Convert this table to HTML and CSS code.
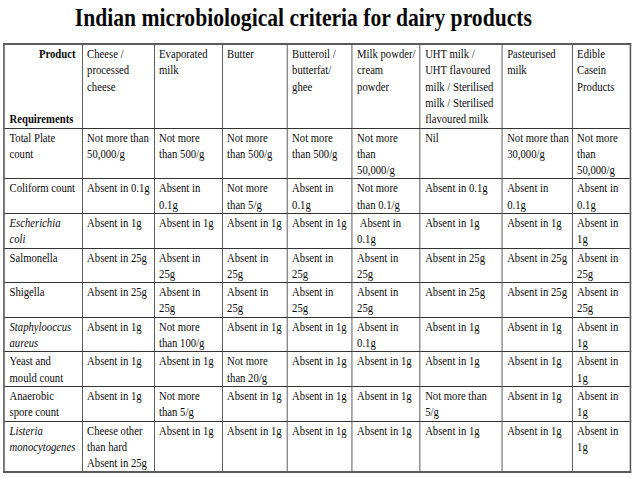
FILE: index.html
```html
<!DOCTYPE html>
<html>
<head>
<meta charset="utf-8">
<link rel="stylesheet" href="styles.css">
</head>
<body>
<div class="title-wrap"><h1 class="title">Indian microbiological criteria for dairy products</h1></div>
<div class="table-wrap">
<table class="criteria">
<colgroup>
<col class="c-req"><col class="c-cheese"><col class="c-evap"><col class="c-butter"><col class="c-oil"><col class="c-powder"><col class="c-uht"><col class="c-past"><col class="c-casein">
</colgroup>
<tr class="head">
<td class="corner"><div class="corner-box"><span class="product">Product</span><span class="req">Requirements</span></div></td>
<td>Cheese /<br>processed<br>cheese</td>
<td>Evaporated<br>milk</td>
<td>Butter</td>
<td>Butteroil /<br>butterfat/<br>ghee</td>
<td>Milk powder/<br>cream<br>powder</td>
<td>UHT milk /<br>UHT flavoured<br>milk / Sterilised<br>milk / Sterilised<br>flavoured milk</td>
<td>Pasteurised<br>milk</td>
<td>Edible<br>Casein<br>Products</td>
</tr>
<tr>
<td>Total Plate<br>count</td>
<td>Not more than<br>50,000/g</td>
<td>Not more<br>than 500/g</td>
<td>Not more<br>than 500/g</td>
<td>Not more<br>than 500/g</td>
<td>Not more<br>than<br>50,000/g</td>
<td>Nil</td>
<td>Not more than<br>30,000/g</td>
<td>Not more<br>than<br>50,000/g</td>
</tr>
<tr>
<td>Coliform count</td>
<td>Absent in 0.1g</td>
<td>Absent in<br>0.1g</td>
<td>Not more<br>than 5/g</td>
<td>Absent in<br>0.1g</td>
<td>Not more<br>than 0.1/g</td>
<td>Absent in 0.1g</td>
<td>Absent in<br>0.1g</td>
<td>Absent in<br>0.1g</td>
</tr>
<tr>
<td class="it">Escherichia<br>coli</td>
<td>Absent in 1g</td>
<td>Absent in 1g</td>
<td>Absent in 1g</td>
<td>Absent in 1g</td>
<td>&nbsp;Absent in<br>0.1g</td>
<td>Absent in 1g</td>
<td>Absent in 1g</td>
<td>Absent in<br>1g</td>
</tr>
<tr>
<td>Salmonella</td>
<td>Absent in 25g</td>
<td>Absent in<br>25g</td>
<td>Absent in<br>25g</td>
<td>Absent in<br>25g</td>
<td>Absent in<br>25g</td>
<td>Absent in 25g</td>
<td>Absent in 25g</td>
<td>Absent in<br>25g</td>
</tr>
<tr>
<td>Shigella</td>
<td>Absent in 25g</td>
<td>Absent in<br>25g</td>
<td>Absent in<br>25g</td>
<td>Absent in<br>25g</td>
<td>Absent in<br>25g</td>
<td>Absent in 25g</td>
<td>Absent in 25g</td>
<td>Absent in<br>25g</td>
</tr>
<tr>
<td class="it">Staphylooccus<br>aureus</td>
<td>Absent in 1g</td>
<td>Not more<br>than 100/g</td>
<td>Absent in 1g</td>
<td>Absent in 1g</td>
<td>Absent in<br>0.1g</td>
<td>Absent in 1g</td>
<td>Absent in 1g</td>
<td>Absent in<br>1g</td>
</tr>
<tr>
<td>Yeast and<br>mould count</td>
<td>Absent in 1g</td>
<td>Absent in 1g</td>
<td>Not more<br>than 20/g</td>
<td>Absent in 1g</td>
<td>Absent in 1g</td>
<td>Absent in 1g</td>
<td>Absent in 1g</td>
<td>Absent in<br>1g</td>
</tr>
<tr>
<td>Anaerobic<br>spore count</td>
<td>Absent in 1g</td>
<td>Not more<br>than 5/g</td>
<td>Absent in 1g</td>
<td>Absent in 1g</td>
<td>Absent in 1g</td>
<td>Not more than<br>5/g</td>
<td>Absent in 1g</td>
<td>Absent in<br>1g</td>
</tr>
<tr>
<td class="it">Listeria<br>monocytogenes</td>
<td>Cheese other<br>than hard<br>Absent in 25g</td>
<td>Absent in 1g</td>
<td>Absent in 1g</td>
<td>Absent in 1g</td>
<td>Absent in 1g</td>
<td>Absent in 1g</td>
<td>Absent in 1g</td>
<td>Absent in<br>1g</td>
</tr>
</table>
</div>
</body>
</html>
```
FILE: styles.css
```css
html, body {
  margin: 0;
  padding: 0;
  background: #ffffff;
}
body {
  width: 638px;
  height: 478px;
  overflow: hidden;
  font-family: "Liberation Serif", "Times New Roman", serif;
  color: #0a0a0a;
}
.title-wrap {
  transform: scaleX(0.865);
  transform-origin: 0 0;
  padding-left: 86.5px;
  padding-top: 3px;
  height: 30px;
  margin-bottom: 10px;
}
.title {
  margin: 0;
  font-size: 25px;
  line-height: 30px;
  font-weight: bold;
  white-space: nowrap;
  color: #0a0a0a;
}
.table-wrap {
  transform: scaleX(0.79);
  transform-origin: 0 0;
  padding-left: 4.4px;
}
.criteria {
  border-collapse: collapse;
  table-layout: fixed;
  width: 792.4px;
  border: 2px solid #5a5a5a;
  font-size: 13.5px;
  line-height: 16.3px;
}
.criteria td {
  border: 1px solid #333333;
  padding: 1px 8px 0 5.7px;
  vertical-align: top;
  white-space: nowrap;
  overflow: hidden;
}
.c-req { width: 98.7px; }
.c-cheese { width: 91.1px; }
.c-evap { width: 86.1px; }
.c-butter { width: 82.3px; }
.c-oil { width: 82.3px; }
.c-powder { width: 86.1px; }
.c-uht { width: 103.8px; }
.c-past { width: 88.6px; }
.c-casein { width: 73.4px; }
.criteria td.it {
  font-style: italic;
}
.corner-box {
  display: flex;
  flex-direction: column;
  justify-content: space-between;
  min-height: 81.5px;
  font-weight: bold;
}
.product {
  text-align: right;
}
.req {
  text-align: left;
}
```
